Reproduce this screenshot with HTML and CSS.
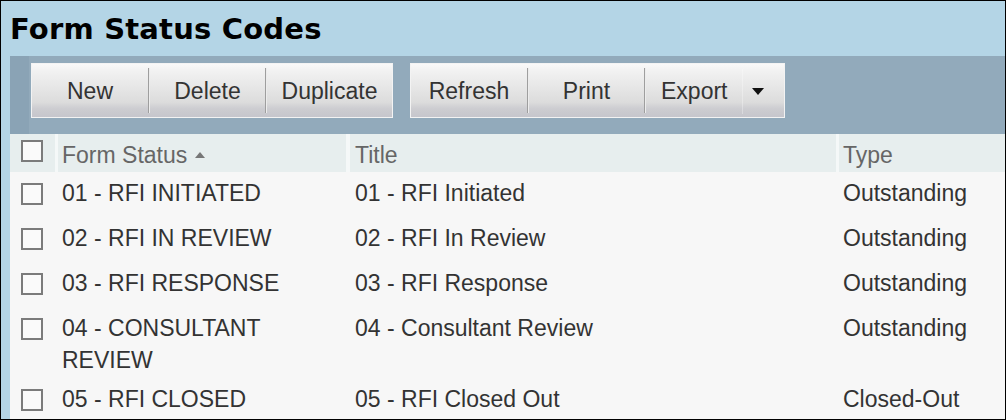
FILE: index.html
```html
<!DOCTYPE html>
<html>
<head>
<meta charset="utf-8">
<title>Form Status Codes</title>
<link rel="stylesheet" href="styles.css">
</head>
<body>
<div class="frame">
  <h1 class="page-title">Form Status Codes</h1>
  <div class="main">
    <div class="toolbar">
      <div class="btn-group">
        <button class="btn btn-a">New</button>
        <span class="sep"></span>
        <button class="btn btn-b">Delete</button>
        <span class="sep"></span>
        <button class="btn btn-c">Duplicate</button>
      </div>
      <div class="btn-group">
        <button class="btn btn-a">Refresh</button>
        <span class="sep"></span>
        <button class="btn btn-b">Print</button>
        <span class="sep"></span>
        <button class="btn btn-export"><span class="export-label">Export</span><span class="drop-div"></span><span class="caret"></span></button>
      </div>
    </div>
    <div class="grid">
      <div class="hcell hcheck"><span class="cb"></span></div>
      <div class="hcell c2">Form Status<span class="sort-up"></span></div>
      <div class="hcell c3">Title</div>
      <div class="hcell c4">Type</div>

      <div class="check"><span class="cb"></span></div>
      <div class="cell c2">01 - RFI INITIATED</div>
      <div class="cell c3">01 - RFI Initiated</div>
      <div class="cell c4">Outstanding</div>

      <div class="check"><span class="cb"></span></div>
      <div class="cell c2">02 - RFI IN REVIEW</div>
      <div class="cell c3">02 - RFI In Review</div>
      <div class="cell c4">Outstanding</div>

      <div class="check"><span class="cb"></span></div>
      <div class="cell c2">03 - RFI RESPONSE</div>
      <div class="cell c3">03 - RFI Response</div>
      <div class="cell c4">Outstanding</div>

      <div class="check"><span class="cb"></span></div>
      <div class="cell c2">04 - CONSULTANT REVIEW</div>
      <div class="cell c3">04 - Consultant Review</div>
      <div class="cell c4">Outstanding</div>

      <div class="check"><span class="cb"></span></div>
      <div class="cell c2">05 - RFI CLOSED</div>
      <div class="cell c3">05 - RFI Closed Out</div>
      <div class="cell c4">Closed-Out</div>
    </div>
  </div>
</div>
</body>
</html>
```
FILE: styles.css
```css
html, body {
  margin: 0;
  padding: 0;
}
body {
  width: 1006px;
  height: 420px;
  overflow: hidden;
  font-family: "Liberation Sans", Arial, sans-serif;
  background: #b4d5e6;
}
.frame {
  box-sizing: border-box;
  width: 1006px;
  height: 420px;
  border: 1px solid #000;
  background: #b4d5e6;
  overflow: hidden;
  display: flex;
  flex-direction: column;
}
.page-title {
  margin: 0;
  height: 55px;
  flex: none;
  padding-left: 9px;
  font: bold 29px/57px "DejaVu Sans", sans-serif;
  letter-spacing: 0.2px;
  color: #000;
  overflow: hidden;
}
.main {
  flex: 1;
  margin-left: 9px;
  display: flex;
  flex-direction: column;
  background: #f7f7f7;
}
.toolbar {
  height: 78px;
  flex: none;
  box-sizing: border-box;
  padding: 7px 0 0 21px;
  background: linear-gradient(to right, #8aa3b5 0, #8aa3b5 19px, #92aabb 19px);
  display: flex;
  gap: 17px;
  align-items: flex-start;
}
.btn-group {
  display: flex;
  align-items: center;
  height: 55px;
  box-sizing: border-box;
  border: 1px solid #f3f3f3;
  background: linear-gradient(to bottom, #f9f9f9 0%, #f1f1f1 14%, #e6e6e6 45%, #dcdcdc 72%, #cdcdd1 84%, #c6c6cc 100%);
}
.btn {
  font: 23px "Liberation Sans", Arial, sans-serif;
  color: #333;
  border: 0;
  background: transparent;
  padding: 2px 0 0;
  margin: 0;
  height: 53px;
  box-sizing: border-box;
  text-align: center;
}
.btn-a { width: 116px; }
.btn-b { width: 115px; }
.btn-c { width: 125px; }
.btn-export {
  width: 138px;
  display: flex;
  align-items: center;
  padding-left: 15px;
}
.export-label {
  width: 81px;
  text-align: left;
}
.drop-div {
  width: 1px;
  height: 45px;
  background: rgba(255, 255, 255, 0.3);
}
.caret {
  margin-left: 9px;
  width: 0;
  height: 0;
  border-left: 6.5px solid transparent;
  border-right: 6.5px solid transparent;
  border-top: 7px solid #111;
  filter: blur(0.4px);
}
.sep {
  width: 2px;
  height: 45px;
  background: linear-gradient(to right, #9e9e9e 50%, #ececec 50%);
}
.grid {
  display: grid;
  grid-template-columns: 45px 291px 490px 1fr;
  color: #333;
  font-size: 23px;
}
.hcell {
  background: #e7eeee;
  height: 38px;
  box-sizing: border-box;
  color: #666;
  line-height: 32px;
  padding-top: 5px;
  white-space: nowrap;
}
.hcheck {
  padding-top: 6px;
  padding-left: 11px;
}
.c2 {
  border-left: 3px solid #f5f8f8;
  padding-left: 4px;
}
.c3 {
  border-left: 4px solid #f5f8f8;
  padding-left: 5px;
}
.c4 {
  border-left: 3px solid #f5f8f8;
  padding-left: 4px;
}
.cell {
  border-left-color: transparent;
  padding-top: 5px;
  padding-bottom: 2px;
  line-height: 32px;
}
.check {
  height: 45px;
  box-sizing: border-box;
  padding: 11px 0 0 11px;
}
.cb {
  display: block;
  width: 22px;
  height: 22px;
  box-sizing: border-box;
  border: 2px solid #7b7b7b;
  background: #fafafa;
}
.sort-up {
  display: inline-block;
  vertical-align: middle;
  margin-left: 8px;
  margin-top: -4px;
  width: 0;
  height: 0;
  border-left: 5.5px solid transparent;
  border-right: 5.5px solid transparent;
  border-bottom: 6px solid #777;
}
```
